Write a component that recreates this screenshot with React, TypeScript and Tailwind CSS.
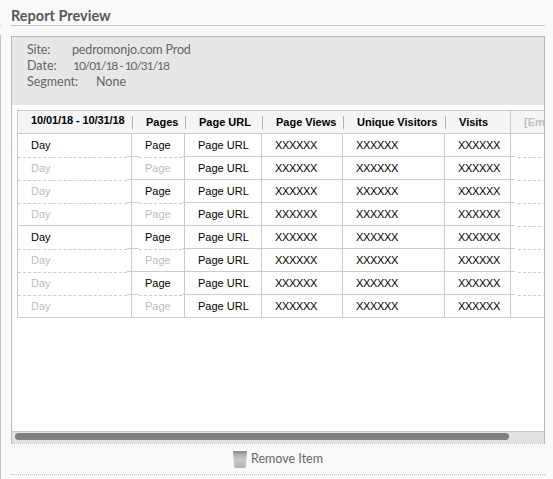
import React from "react";

// ── Data ──────────────────────────────────────────────────────
const COLUMNS = [
  { label: "Pages", width: "w-[53px]" },
  { label: "Page URL", width: "w-[77px]" },
  { label: "Page Views", width: "w-[81px]" },
  { label: "Unique Visitors", width: "w-[102px]" },
  { label: "Visits", width: "w-[65px]" },
];

const ROWS = [
  { day: true, page: true },
  { day: false, page: false },
  { day: false, page: true },
  { day: false, page: false },
  { day: true, page: true },
  { day: false, page: false },
  { day: false, page: true },
  { day: false, page: false },
];

// ── Row rule: solid, or dashed with short solid stubs at the cell edges ──
const DashedRule: React.FC<{ left?: string; right?: string }> = ({ left, right }) => (
  <div className="flex h-px">
    {left && <div className={`${left} h-px bg-[#cccccc]`} />}
    <div className="flex-1 translate-y-px border-t border-dashed border-[#cccccc]" />
    {right && <div className={`${right} h-px bg-[#cccccc]`} />}
  </div>
);

const Cell: React.FC<{
  muted?: boolean;
  dashed?: boolean;
  left?: string;
  right?: string;
  width: string;
  tight?: boolean;
  children?: React.ReactNode;
}> = ({ muted, dashed, left, right, width, tight, children }) => (
  <div className={`${width} shrink-0 h-[23px] border-r border-[#cccccc] flex flex-col`}>
    {dashed ? <DashedRule left={left} right={right} /> : <div className="h-px bg-[#cccccc]" />}
    <span className={`pl-[13px] text-[11px] leading-[22px] ${tight ? "tracking-[-0.33px]" : ""} ${muted ? "text-[#bdbdbd]" : "text-black"}`}>
      {children}
    </span>
  </div>
);

const Divider = () => <span className="absolute right-0 top-[5px] h-[13px] w-px bg-[#b5b5b5]" />;

const App: React.FC = () => (
  <div className="w-[553px] h-[479px] overflow-hidden bg-[#f9f9f9] font-['Lato',sans-serif] flex">
    <div className="w-px shrink-0 flex flex-col">
      <div className="mt-[25px] h-px bg-[#c8c8c8]" />
      <div className="mt-[9px] flex-1 bg-[#c4c4c4]" />
    </div>
    <div className="w-[534px] ml-[10px] flex flex-col">
      <h2 className="h-[26px] pt-[7px] border-b border-[#c8c8c8] text-[14.5px] leading-[18px] font-bold text-[#595959]">
        Report Preview
      </h2>

      <section className="mt-[10px] h-[407px] flex flex-col border-l border-r border-t border-[#b9b9b9] bg-white">
        <div className="h-[68px] shrink-0 bg-[#e7e7e7] pl-[15px] pt-[5px] text-[12.5px] leading-[16px] text-[#666666]">
          <p className="flex tracking-[-0.15px]"><span className="w-[45px]">Site:</span>pedromonjo.com Prod</p>
          <p className="flex"><span className="w-[46px]">Date:</span><span className="text-[12px] tracking-[-1.05px]">10/01/18 - 10/31/18</span></p>
          <p className="flex"><span className="w-[69px]">Segment:</span>None</p>
        </div>

        <div className="flex-1 overflow-hidden pt-[5px] pl-[5px] font-['Liberation_Sans',sans-serif]">
          <div className="w-[600px] h-[23px] flex border-t border-[#cccccc] bg-[#f5f5f5] text-[11px] font-bold">
            <div className="w-[494px] shrink-0 flex border-l border-r border-[#cccccc] text-black">
              <div className="w-[115px] shrink-0 relative">
                <span className="block pl-[13px] leading-[18px] tracking-[-0.1px]">10/01/18 - 10/31/18</span>
                <Divider />
              </div>
              {COLUMNS.map((col, i) => (
                <div key={col.label} className={`${col.width} shrink-0 relative pl-[13px] leading-[22px]`}>
                  {col.label}
                  {i < COLUMNS.length - 1 && <Divider />}
                </div>
              ))}
            </div>
            <div className="flex-1 pl-[13px] leading-[22px] text-[#c2c2b8]">[Empty]</div>
          </div>

          {ROWS.map((row, i) => (
            <div key={i} className="flex w-[600px] h-[23px]">
              <div className="flex border-l border-[#cccccc]">
                <Cell width="w-[114px]" muted={!row.day} dashed={!row.day} right="w-[4px]">Day</Cell>
                <Cell width="w-[53px]" muted={!row.page} dashed={!row.page} left="w-[7px]" right="w-[2px]">Page</Cell>
                <Cell width="w-[77px]">Page URL</Cell>
                <Cell width="w-[81px]" tight>XXXXXX</Cell>
                <Cell width="w-[102px]" tight>XXXXXX</Cell>
                <Cell width="w-[66px]" tight>XXXXXX</Cell>
              </div>
              <div className="flex-1">
                {i === 0 ? (
                  <div className="h-px bg-[#cccccc]" />
                ) : (
                  <div className="flex h-px">
                    <div className="w-[4px] h-px bg-[#cccccc]" />
                    <div className="flex-1 ml-[3px] translate-y-px border-t border-dashed border-[#cccccc]" />
                  </div>
                )}
              </div>
            </div>
          ))}
          <div className="w-[600px] border-t border-[#cccccc]" />
        </div>

        <div className="h-[12px] shrink-0 bg-[#e1e3e2] border-t border-[#c8c8c8] pt-px pl-[3px]">
          <div className="h-[7px] w-[494px] rounded-full bg-[#808080]" />
        </div>
      </section>

      <div className="h-[32px] flex items-center justify-center gap-[4px] border-t border-b border-dotted border-[#c4c4c4] text-[12.5px] text-[#666666]">
        <svg width="14" height="17" viewBox="0 0 14 17">
          <defs>
            <linearGradient id="bin" x1="0" y1="0" x2="0" y2="1">
              <stop offset="0" stopColor="#a8a8a4" />
              <stop offset="0.5" stopColor="#c9c9c5" />
              <stop offset="1" stopColor="#b5b5b1" />
            </linearGradient>
          </defs>
          <path d="M0 1.5h14l-1.2 14a1.5 1.5 0 0 1-1.5 1.5h-8.6a1.5 1.5 0 0 1-1.5-1.5z" fill="url(#bin)" />
          <rect x="0" y="0" width="14" height="2.5" rx="1" fill="#8f8f8f" />
        </svg>
        Remove Item
      </div>
    </div>
  </div>
);

export default App;
